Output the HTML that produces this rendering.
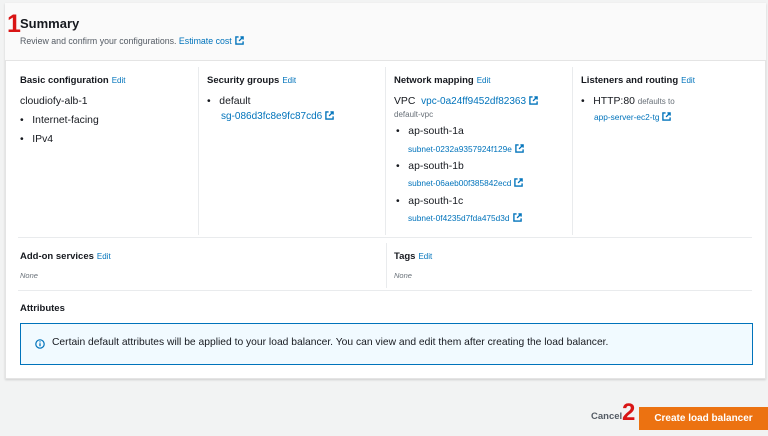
<!DOCTYPE html>
<html><head><meta charset="utf-8"><style>
*{margin:0;padding:0;box-sizing:border-box}
body{width:768px;height:436px;background:#f2f3f3;font-family:"Liberation Sans",sans-serif;color:#16191f;position:relative;overflow:hidden}
.a{position:absolute;white-space:nowrap}
.card{position:absolute;left:5px;top:3px;width:761px;height:376px;background:#fff;border:1px solid #e4e4e4;box-shadow:0 1px 2px rgba(0,0,0,.15)}
.hdr{position:absolute;left:5px;top:3px;width:761px;height:58px;background:#fafafa;border-bottom:1px solid #e4e4e4}
.h{font-size:9.5px;font-weight:bold}
.e{color:#0073bb;font-size:8px;font-weight:normal;margin-left:3px}
.t{font-size:10.4px;color:#16191f}
.l{font-size:10px;color:#0073bb}
.s{font-size:8.3px;color:#0073bb}
.g{font-size:8px;color:#687078}
.vl{position:absolute;width:1px;background:#e9ebed}
.hl{position:absolute;height:1px;background:#e9ebed}
.ic{display:inline-block;width:9px;height:9px;vertical-align:-1px;margin-left:3px}
</style></head><body>
<div class="card"></div>
<div class="hdr"></div>
<div class="a" style="left:7px;top:12px;font-size:25px;font-weight:bold;color:#d91515;line-height:25px">1</div>
<div class="a" style="left:20px;top:16px;font-size:13px;font-weight:bold">Summary</div>
<div class="a" style="left:20px;top:36px;font-size:8.8px;color:#545b64">Review and confirm your configurations. <span style="color:#0073bb">Estimate cost</span><svg class="ic" viewBox="0 0 10 10"><path d="M4 1H1v8h8V6" fill="none" stroke="#0073bb" stroke-width="1.5"/><path d="M6 1h3v3M9 1L4.5 5.5" fill="none" stroke="#0073bb" stroke-width="1.5"/></svg></div>

<div class="vl" style="left:198px;top:67px;height:168px"></div>
<div class="vl" style="left:385px;top:67px;height:168px"></div>
<div class="vl" style="left:572px;top:67px;height:168px"></div>

<div class="a h" style="left:20px;top:75px">Basic configuration<span class="e">Edit</span></div>
<div class="a t" style="left:20px;top:96px">cloudiofy-alb-1</div>
<div class="a t" style="left:20px;top:115px">•&nbsp;&nbsp;&nbsp;Internet-facing</div>
<div class="a t" style="left:20px;top:134px">•&nbsp;&nbsp;&nbsp;IPv4</div>

<div class="a h" style="left:207px;top:75px">Security groups<span class="e">Edit</span></div>
<div class="a t" style="left:207px;top:96px">•&nbsp;&nbsp;&nbsp;default</div>
<div class="a l" style="left:221px;top:111px">sg-086d3fc8e9fc87cd6<svg class="ic" viewBox="0 0 10 10"><path d="M4 1H1v8h8V6" fill="none" stroke="#0073bb" stroke-width="1.5"/><path d="M6 1h3v3M9 1L4.5 5.5" fill="none" stroke="#0073bb" stroke-width="1.5"/></svg></div>

<div class="a h" style="left:394px;top:75px">Network mapping<span class="e">Edit</span></div>
<div class="a t" style="left:394px;top:96px">VPC&nbsp; <span class="l">vpc-0a24ff9452df82363</span><svg class="ic" viewBox="0 0 10 10"><path d="M4 1H1v8h8V6" fill="none" stroke="#0073bb" stroke-width="1.5"/><path d="M6 1h3v3M9 1L4.5 5.5" fill="none" stroke="#0073bb" stroke-width="1.5"/></svg></div>
<div class="a g" style="left:394px;top:110px">default-vpc</div>
<div class="a t" style="left:396px;top:126px">•&nbsp;&nbsp;&nbsp;ap-south-1a</div>
<div class="a s" style="left:408px;top:144px">subnet-0232a9357924f129e<svg class="ic" viewBox="0 0 10 10"><path d="M4 1H1v8h8V6" fill="none" stroke="#0073bb" stroke-width="1.5"/><path d="M6 1h3v3M9 1L4.5 5.5" fill="none" stroke="#0073bb" stroke-width="1.5"/></svg></div>
<div class="a t" style="left:396px;top:161px">•&nbsp;&nbsp;&nbsp;ap-south-1b</div>
<div class="a s" style="left:408px;top:178px">subnet-06aeb00f385842ecd<svg class="ic" viewBox="0 0 10 10"><path d="M4 1H1v8h8V6" fill="none" stroke="#0073bb" stroke-width="1.5"/><path d="M6 1h3v3M9 1L4.5 5.5" fill="none" stroke="#0073bb" stroke-width="1.5"/></svg></div>
<div class="a t" style="left:396px;top:196px">•&nbsp;&nbsp;&nbsp;ap-south-1c</div>
<div class="a s" style="left:408px;top:213px">subnet-0f4235d7fda475d3d<svg class="ic" viewBox="0 0 10 10"><path d="M4 1H1v8h8V6" fill="none" stroke="#0073bb" stroke-width="1.5"/><path d="M6 1h3v3M9 1L4.5 5.5" fill="none" stroke="#0073bb" stroke-width="1.5"/></svg></div>

<div class="a h" style="left:581px;top:75px">Listeners and routing<span class="e">Edit</span></div>
<div class="a t" style="left:581px;top:96px">•&nbsp;&nbsp;&nbsp;HTTP:80 <span class="g">defaults to</span></div>
<div class="a s" style="left:594px;top:112px">app-server-ec2-tg<svg class="ic" viewBox="0 0 10 10"><path d="M4 1H1v8h8V6" fill="none" stroke="#0073bb" stroke-width="1.5"/><path d="M6 1h3v3M9 1L4.5 5.5" fill="none" stroke="#0073bb" stroke-width="1.5"/></svg></div>

<div class="hl" style="left:18px;top:237px;width:734px"></div>
<div class="vl" style="left:386px;top:243px;height:45px"></div>
<div class="a h" style="left:20px;top:251px">Add-on services<span class="e">Edit</span></div>
<div class="a" style="left:20px;top:271px;font-size:7.5px;font-style:italic;color:#687078">None</div>
<div class="a h" style="left:394px;top:251px">Tags<span class="e">Edit</span></div>
<div class="a" style="left:394px;top:271px;font-size:7.5px;font-style:italic;color:#687078">None</div>
<div class="hl" style="left:18px;top:290px;width:734px"></div>

<div class="a h" style="left:20px;top:303px">Attributes</div>
<div class="a" style="left:20px;top:323px;width:733px;height:42px;background:#f1faff;border:1px solid #0073bb"></div>
<svg class="a" style="left:35px;top:339px" width="10" height="10" viewBox="0 0 10 10"><circle cx="5" cy="5" r="4.2" fill="none" stroke="#0073bb" stroke-width="1.2"/><path d="M5 4.2v3M5 2.4v1" stroke="#0073bb" stroke-width="1.3"/></svg>
<div class="a" style="left:52px;top:337px;font-size:10.3px;color:#16191f">Certain default attributes will be applied to your load balancer. You can view and edit them after creating the load balancer.</div>

<div class="a" style="left:591px;top:411px;font-size:9.5px;font-weight:bold;color:#545b64">Cancel</div>
<div class="a" style="left:622px;top:401px;font-size:24px;font-weight:bold;color:#d91515;line-height:24px">2</div>
<div class="a" style="left:639px;top:407px;width:129px;height:23px;background:#ec7211;color:#fff;font-size:10px;font-weight:bold;text-align:center;line-height:23px">Create load balancer</div>
</body></html>
